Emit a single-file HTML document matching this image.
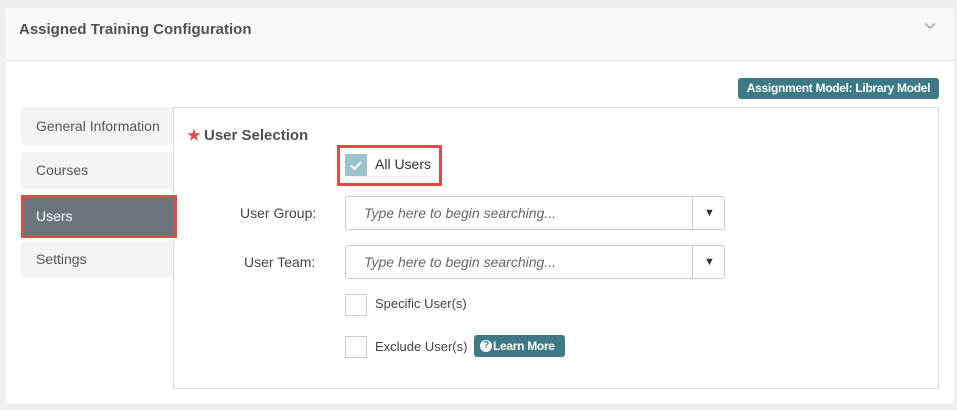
<!DOCTYPE html>
<html><head><meta charset="utf-8"><style>
*{box-sizing:border-box;margin:0;padding:0}
body{width:957px;height:410px;background:#efefef;font-family:"Liberation Sans",sans-serif;position:relative;overflow:hidden;color:#444}
.card{position:absolute;left:6px;top:8px;width:948px;height:395px;background:#fff;border-radius:3px}
.hdr{position:absolute;left:0;top:0;width:948px;height:53px;background:#f9f9f9;border-bottom:1px solid #e2e2e2;border-radius:3px 3px 0 0}
.hdr h1{position:absolute;left:13px;top:13px;font-size:15px;font-weight:bold;color:#505050}
.chev{position:absolute;left:918px;top:14px}
.badge{position:absolute;left:738px;top:78px;width:201px;height:21px;background:#3d7a85;color:#fff;font-size:12px;font-weight:bold;border-radius:3px;text-align:center;line-height:21px;letter-spacing:-0.3px}
.tab{position:absolute;left:21px;width:153px;background:#f4f4f4;border-radius:4px 0 0 4px;font-size:14px;color:#555;padding-left:15px}
.panel{position:absolute;left:173px;top:107px;width:766px;height:282px;border:1px solid #dcdcdc;background:#fff}
.abs{position:absolute}
.cb{position:absolute;width:22px;height:22px;border:1px solid #ccc;background:#fff}
.inp{position:absolute;left:345px;width:380px;height:34px;border:1px solid #ccc;border-radius:3px}
.inp span{position:absolute;left:18px;top:8px;font-style:italic;color:#666;font-size:14px}
.inp i{position:absolute;left:346px;top:0;width:1px;height:32px;background:#ccc}
.inp b{position:absolute;left:358px;top:10px;font-size:11px;color:#333}
.lbl{position:absolute;font-size:14px;color:#444}
</style></head><body>
<div class="card">
 <div class="hdr"><h1>Assigned Training Configuration</h1>
 <svg class="chev" width="12" height="8" viewBox="0 0 12 8"><path d="M1 1.5 6 6 11 1.5" fill="none" stroke="#aaa" stroke-width="1.6"/></svg></div>
</div>
<div class="badge">Assignment Model: Library Model</div>
<div class="tab" style="top:107px;height:38px;line-height:38px">General Information</div>
<div class="tab" style="top:152px;height:37px;line-height:37px">Courses</div>
<div class="tab" style="top:241px;height:37px;line-height:37px">Settings</div>
<div class="panel"></div>
<div class="abs" style="left:21px;top:195px;width:156px;height:43px;background:#6b757b;border:3px solid #e24a45;color:#fff;font-size:14px;line-height:37px;padding-left:12px">Users</div>
<svg class="abs" style="left:187px;top:128px" width="14" height="14" viewBox="0 0 14 14"><path d="M7 0.5 8.6 5.2 13.6 5.2 9.6 8.2 11.1 13 7 10 2.9 13 4.4 8.2 0.4 5.2 5.4 5.2Z" fill="#e84c4c"/></svg>
<div class="lbl" style="left:204px;top:127px;font-size:15px;color:#505050;font-weight:bold">User Selection</div>
<div class="abs" style="left:337px;top:145px;width:105px;height:41px;border:3px solid #e24a45"></div>
<div class="abs" style="left:345px;top:154px;width:22px;height:22px;background:#9dc4cc"><svg width="22" height="22"><path d="M6 11.5 9.5 15 16 8" fill="none" stroke="#fff" stroke-width="2"/></svg></div>
<div class="lbl" style="left:375px;top:156px;color:#333">All Users</div>
<div class="lbl" style="left:240px;top:205px">User Group:</div>
<div class="inp" style="top:196px"><span>Type here to begin searching...</span><i></i><b>▼</b></div>
<div class="lbl" style="left:244px;top:254px">User Team:</div>
<div class="inp" style="top:245px"><span>Type here to begin searching...</span><i></i><b>▼</b></div>
<div class="cb" style="left:345px;top:294px"></div>
<div class="lbl" style="left:375px;top:296px;font-size:13px">Specific User(s)</div>
<div class="cb" style="left:345px;top:336px"></div>
<div class="lbl" style="left:375px;top:339px;font-size:13px">Exclude User(s)</div>
<div class="abs" style="left:474px;top:335px;width:91px;height:22px;background:#3d7a85;border-radius:3px;color:#fff;font-size:12px;font-weight:bold;line-height:22px;padding-left:6px;letter-spacing:-0.3px;display:flex;align-items:center"><span style="display:inline-block;width:12px;height:12px;border-radius:50%;background:#fff;color:#3d7a85;font-size:10px;line-height:12px;text-align:center;margin-right:1px">?</span>Learn More</div>
</body></html>
